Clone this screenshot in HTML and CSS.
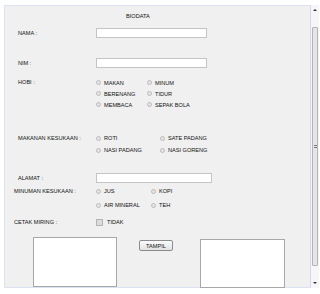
FILE: index.html
```html
<!DOCTYPE html>
<html>
<head>
  <title>Biodata</title>
  <link rel="stylesheet" href="styles.css">
</head>
<body>
  <div class="window">
    <div class="panel">
      <div class="title">BIODATA</div>

      <div class="row field-row row-nama">
        <label class="label">NAMA :</label>
        <input type="text" class="field">
      </div>

      <div class="row field-row row-nim">
        <label class="label">NIM :</label>
        <input type="text" class="field">
      </div>

      <div class="group group-hobi">
        <div class="label">HOBI :</div>
        <div class="options">
          <span class="opt"><span class="radio"></span>MAKAN</span>
          <span class="opt"><span class="radio"></span>MINUM</span>
          <span class="opt"><span class="radio"></span>BERENANG</span>
          <span class="opt"><span class="radio"></span>TIDUR</span>
          <span class="opt"><span class="radio"></span>MEMBACA</span>
          <span class="opt"><span class="radio"></span>SEPAK BOLA</span>
        </div>
      </div>

      <div class="group group-makanan">
        <div class="label">MAKANAN KESUKAAN :</div>
        <div class="options">
          <span class="opt"><span class="radio"></span>ROTI</span>
          <span class="opt"><span class="radio"></span>SATE PADANG</span>
          <span class="opt"><span class="radio"></span>NASI PADANG</span>
          <span class="opt"><span class="radio"></span>NASI GORENG</span>
        </div>
      </div>

      <div class="row field-row row-alamat">
        <label class="label">ALAMAT :</label>
        <input type="text" class="field wide">
      </div>

      <div class="group group-minuman">
        <div class="label label-left">MINUMAN KESUKAAN :</div>
        <div class="options">
          <span class="opt"><span class="radio"></span>JUS</span>
          <span class="opt"><span class="radio"></span>KOPI</span>
          <span class="opt"><span class="radio"></span>AIR MINERAL</span>
          <span class="opt"><span class="radio"></span>TEH</span>
        </div>
      </div>

      <div class="row row-cetak">
        <div class="label label-left">CETAK MIRING :</div>
        <span class="opt"><span class="check"></span>TIDAK</span>
      </div>

      <div class="bottom">
        <div class="area area-left"></div>
        <button class="btn">TAMPIL</button>
        <div class="area area-right"></div>
      </div>
    </div>

    <div class="scrollbar">
      <div class="arrow arrow-up"></div>
      <div class="thumb"><span class="grip"></span></div>
      <div class="arrow arrow-down"></div>
    </div>
  </div>
</body>
</html>
```

FILE: styles.css
```css
body {
  margin: 0;
  background: #ffffff;
  font-family: "Liberation Sans", Arial, sans-serif;
  font-size: 5.6px;
  color: #111111;
}
.window {
  display: flex;
  margin-top: 5px;
  margin-left: 4px;
  height: 283px;
}
.panel {
  width: 305px;
  height: 281px;
  background: #f0f0f0;
  border: 1px solid #dde2f2;
  border-right-color: #d4d9ee;
}
.title {
  margin-top: 5px;
  margin-left: 121px;
  height: 10px;
  line-height: 10px;
}
.row {
  display: flex;
  align-items: center;
}
.label {
  width: 78px;
  padding-left: 13px;
  flex-shrink: 0;
}
.label-left {
  padding-left: 9px;
  width: 82px;
}
.field {
  width: 111px;
  height: 10px;
  box-sizing: border-box;
  border: 1px solid #c4c4c4;
  background: #ffffff;
  margin: 0;
  padding: 0;
}
.field.wide {
  width: 116px;
}
.field-row {
  height: 10px;
}
.row-nama {
  margin-top: 7px;
}
.row-nim {
  margin-top: 20px;
}
.row-alamat {
  margin-top: 17px;
}
.group {
  display: flex;
}
.group .label {
  height: 11px;
  line-height: 11px;
}
.options {
  display: grid;
}
.opt {
  display: flex;
  align-items: center;
  gap: 3px;
  white-space: nowrap;
}
.radio {
  width: 5px;
  height: 5px;
  box-sizing: border-box;
  border-radius: 50%;
  border: 1px solid #bcbcbc;
  background: #e4e4e4;
}
.check {
  width: 7px;
  height: 7px;
  box-sizing: border-box;
  border: 1px solid #b4b4b4;
  background: #dcdcdc;
}
.group-hobi {
  margin-top: 9px;
}
.group-hobi .options {
  grid-template-columns: 51px auto;
  grid-auto-rows: 11px;
}
.group-makanan {
  margin-top: 22px;
}
.group-makanan .label {
  height: 12px;
  line-height: 12px;
}
.group-makanan .options {
  grid-template-columns: 64px auto;
  grid-auto-rows: 12px;
}
.group-minuman {
  margin-top: 1px;
}
.group-minuman .label {
  height: 14px;
  line-height: 14px;
}
.group-minuman .options {
  grid-template-columns: 55px auto;
  grid-auto-rows: 14px;
}
.row-cetak {
  margin-top: 4px;
  height: 12px;
}
.row-cetak .check {
  margin-right: 1px;
}
.bottom {
  display: flex;
  align-items: flex-start;
  margin-top: 9px;
}
.area {
  background: #ffffff;
  border: 1px solid #a8a8a8;
  box-sizing: border-box;
}
.area-left {
  margin-left: 28px;
  width: 84px;
  height: 50px;
}
.area-right {
  margin-left: 27px;
  margin-top: 2px;
  width: 85px;
  height: 49px;
}
.btn {
  margin-left: 22px;
  margin-top: 3px;
  width: 34px;
  height: 11px;
  padding: 0;
  font-family: inherit;
  font-size: 5.6px;
  color: #111111;
  border: 1px solid #8c8c8c;
  border-radius: 2px;
  background: linear-gradient(#fbfbfb, #e2e2e2);
}
.scrollbar {
  width: 8px;
  height: 283px;
  background: #f6f6f6;
  display: flex;
  flex-direction: column;
  align-items: center;
}
.arrow {
  width: 0;
  height: 0;
  border-left: 2px solid transparent;
  border-right: 2px solid transparent;
}
.arrow-up {
  margin-top: 4px;
  border-bottom: 2px solid #333333;
}
.arrow-down {
  margin-top: 16px;
  border-top: 2px solid #333333;
}
.thumb {
  margin-top: 16px;
  width: 6px;
  height: 239px;
  box-sizing: border-box;
  border: 1px solid #b4b4b4;
  border-radius: 1px;
  background: #e6e6e6;
  display: flex;
  align-items: center;
  justify-content: center;
}
.grip {
  width: 3px;
  height: 3px;
  border-top: 1px solid #777777;
  border-bottom: 1px solid #777777;
  box-sizing: border-box;
}
```
